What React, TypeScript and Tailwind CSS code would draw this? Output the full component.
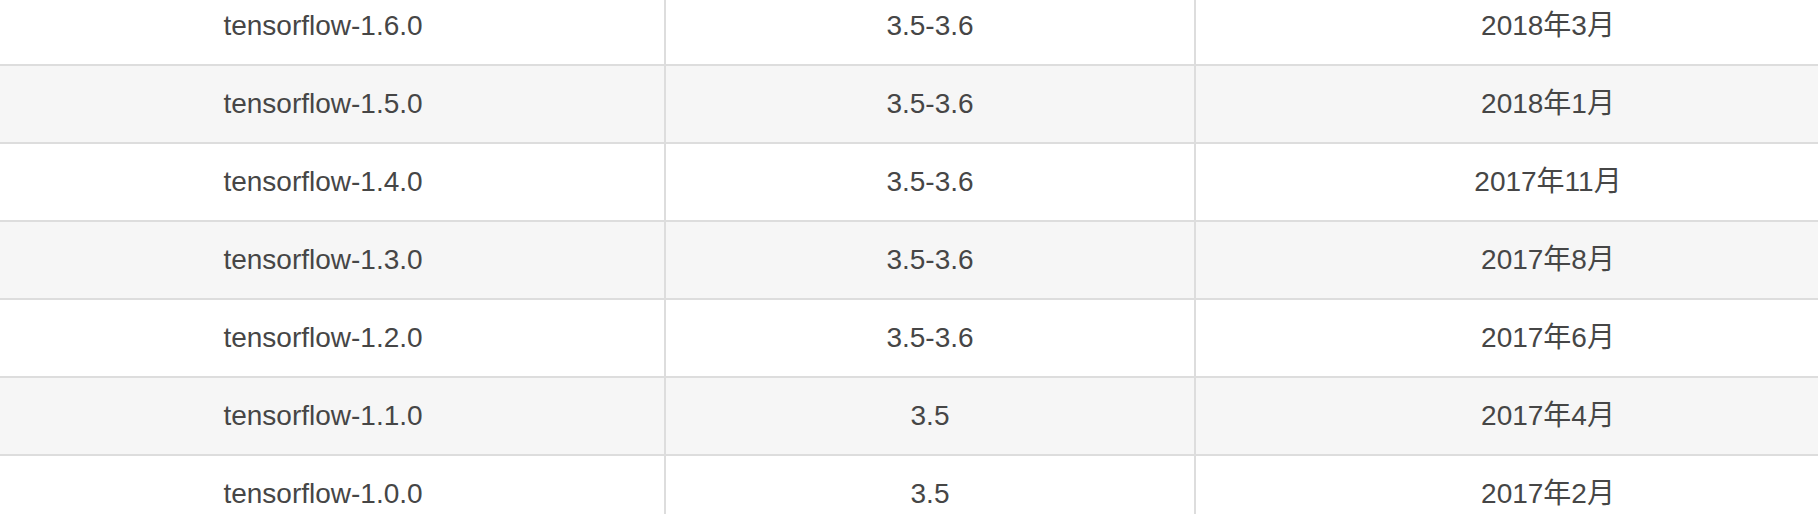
const rows = [
  { name: 'tensorflow-1.6.0', py: '3.5-3.6', date: '2018年3月' },
  { name: 'tensorflow-1.5.0', py: '3.5-3.6', date: '2018年1月' },
  { name: 'tensorflow-1.4.0', py: '3.5-3.6', date: '2017年11月' },
  { name: 'tensorflow-1.3.0', py: '3.5-3.6', date: '2017年8月' },
  { name: 'tensorflow-1.2.0', py: '3.5-3.6', date: '2017年6月' },
  { name: 'tensorflow-1.1.0', py: '3.5', date: '2017年4月' },
  { name: 'tensorflow-1.0.0', py: '3.5', date: '2017年2月' },
];

export default function App() {
  return (
    <div className="h-[514px] w-full overflow-hidden bg-white">
      <div
        className="ml-[-18px] mt-[-12px] w-[1918px] text-[28px] text-[#464646]"
        style={{ fontFamily: '"Liberation Sans", "Noto Sans CJK SC", sans-serif' }}
      >
        {rows.map((r, i) => (
          <div
            key={r.name}
            className={`grid h-[78px] grid-cols-[684px_530px_704px] border-b-2 border-[#dddddd] ${
              i % 2 === 1 ? 'bg-[#f6f6f6]' : 'bg-white'
            }`}
          >
            <div className="flex items-center justify-center border-r-2 border-[#dddddd]">{r.name}</div>
            <div className="flex items-center justify-center border-r-2 border-[#dddddd]">{r.py}</div>
            <div className="flex items-center justify-center">{r.date}</div>
          </div>
        ))}
      </div>
    </div>
  );
}
